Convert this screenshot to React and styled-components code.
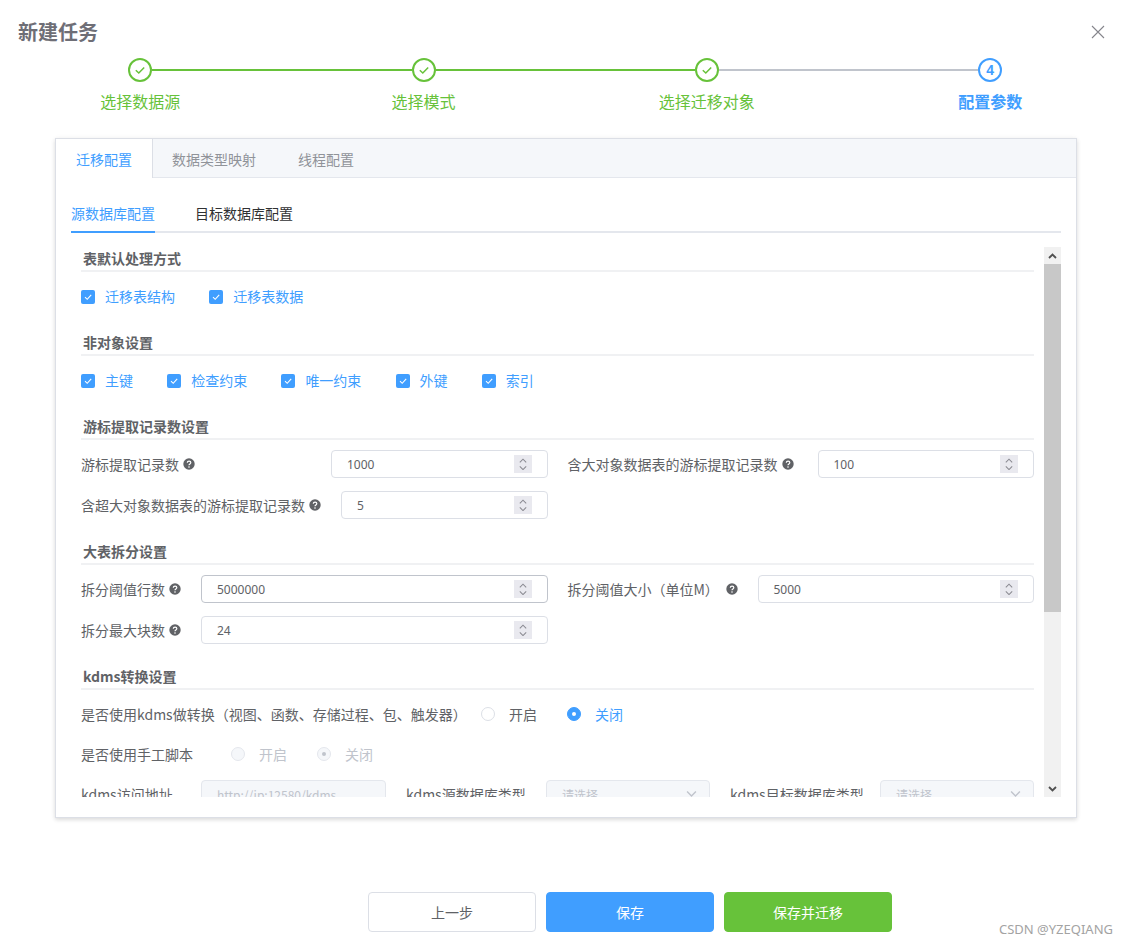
import React from "react"
import styled, { createGlobalStyle } from "styled-components"

const GlobalStyle = createGlobalStyle`
html, body {
  margin: 0;
  padding: 0;
  background: #fff;
  font-family: "Noto Sans CJK SC", "Noto Sans", sans-serif;
}
* { box-sizing: border-box; }
`

const Page = styled.div`
position: relative;
width: 1128px;
height: 946px;
overflow: hidden;
background: #fff;
`

const Header = styled.div`
display: flex;
justify-content: space-between;
align-items: center;
height: 58px;
padding: 6px 23px 0 18px;
`

const Title = styled.h1`
margin: 0;
font-size: 20px;
font-weight: 700;
line-height: 28px;
color: #6e6e76;
`

const CloseBtn = styled.button`
display: flex;
padding: 0;
border: none;
background: none;
color: #85858c;
cursor: pointer;
`

const Steps = styled.div`
display: grid;
grid-template-columns: repeat(4, 283.33px);
width: 1134px;
margin-left: -1.5px;
height: 80px;
`

const Step = styled.div`
display: flex;
flex-direction: column;
align-items: stretch;
`

const StepHead = styled.div`
display: flex;
align-items: center;
height: 24px;
`

const Seg = styled.div`
flex: 1;
height: 2px;
background: ${props => props.$color};
`

const Circle = styled.div`
display: flex;
align-items: center;
justify-content: center;
width: 24px;
height: 24px;
border: 2px solid ${props => props.$color};
border-radius: 50%;
color: ${props => props.$color};
font-family: "Liberation Sans", sans-serif;
font-size: 14px;
font-weight: 700;
`

const StepLabel = styled.div`
margin-top: 7px;
text-align: center;
font-size: 16px;
line-height: 24px;
font-weight: ${props => props.$active ? 700 : 400};
color: ${props => props.$active ? "#409eff" : "#67c23a"};
`

const Card = styled.div`
width: 1022px;
height: 680px;
margin-left: 55px;
border: 1px solid #dcdfe6;
background: #fff;
box-shadow: 0 2px 4px rgba(0,0,0,0.12), 0 0 6px rgba(0,0,0,0.04);
`

const TabBar = styled.div`
display: flex;
height: 39px;
background: #f5f7fa;
border-bottom: 1px solid #e4e7ed;
`

const Tab = styled.div`
height: ${props => props.$active ? "39px" : "38px"};
padding: ${props => props.$active ? "0 20px" : "0 22px 0 20px"};
margin-right: ${props => props.$active ? "-1px" : "0"};
line-height: 41px;
font-size: 14px;
color: ${props => props.$active ? "#409eff" : "#909399"};
background: ${props => props.$active ? "#fff" : "transparent"};
border-right: ${props => props.$active ? "1px solid #dcdfe6" : "none"};
`

const CardBody = styled.div`
padding: 17px 15px 0;
`

const InnerTabs = styled.div`
display: flex;
gap: 40px;
height: 38px;
border-bottom: 2px solid #e4e7ed;
margin-bottom: 14px;
`

const InnerTab = styled.div`
height: 38px;
line-height: 36px;
font-size: 14px;
color: ${props => props.$active ? "#409eff" : "#303133"};
border-bottom: ${props => props.$active ? "2px solid #409eff" : "none"};
`

const ScrollArea = styled.div`
display: flex;
height: 550px;
`

const ScrollContent = styled.div`
flex: 1;
overflow: hidden;
padding: 1px 10px 0;
`

const ScrollBar = styled.div`
display: flex;
flex-direction: column;
width: 17px;
background: #f1f1f1;
`

const ScrollArrow = styled.div`
display: flex;
align-items: center;
justify-content: center;
height: 17px;
color: #505050;
`

const ScrollThumb = styled.div`
height: 348px;
background: #c8c8c8;
`

const ScrollFill = styled.div`
flex: 1;
`

const Section = styled.section`
padding-bottom: 22px;
`

const SectionTitle = styled.div`
height: 24px;
padding-left: 2px;
margin-bottom: 10px;
border-bottom: 2px solid #f0f1f3;
font-size: 14px;
font-weight: 700;
line-height: 21px;
color: #606266;
`

const CheckRow = styled.div`
display: flex;
align-items: center;
height: 28px;
`

const Check = styled.label`
display: flex;
align-items: center;
margin-right: 34.2px;
font-size: 14px;
color: #409eff;
`

const CheckBox = styled.span`
display: flex;
align-items: center;
justify-content: center;
width: 14px;
height: 14px;
margin: 2px 10px 0 0;
border-radius: 2px;
background: #409eff;
color: #fff;
`

const FormRow = styled.div`
display: flex;
gap: 20px;
margin-bottom: ${props => props.$gap || 13}px;
&:last-child { margin-bottom: 0; }
`

const FormItem = styled.div`
display: flex;
align-items: center;
flex: ${props => props.$grow || 1} 1 0;
height: 28px;
min-width: 0;
`

const Label = styled.div`
display: flex;
align-items: center;
flex: none;
width: ${props => props.$w}px;
font-size: 14px;
color: #606266;
white-space: nowrap;
`

const HelpIcon = styled.svg`
width: 12px;
height: 12px;
margin-left: ${props => props.$ml || 4}px;
flex: none;
`

const NumInput = styled.div`
display: flex;
align-items: center;
justify-content: space-between;
flex: 1;
height: 28px;
padding: 0 15px 0 15px;
border: 1px solid ${props => props.$hover ? "#c0c4cc" : "#dcdfe6"};
border-radius: 4px;
font-family: "Noto Sans", sans-serif;
font-size: 12px;
color: #606266;
`

const Spinner = styled.div`
display: flex;
flex-direction: column;
align-items: center;
justify-content: center;
gap: 3px;
width: 18px;
height: 18px;
background: #e9e9ef;
color: #8b8b92;
`

const Choice = styled.label`
display: flex;
align-items: center;
margin-right: 30px;
font-size: 14px;
color: ${props => props.$disabled ? "#c0c4cc" : props.$checked ? "#409eff" : "#606266"};
`

const RadioDot = styled.span`
display: flex;
align-items: center;
justify-content: center;
width: 14px;
height: 14px;
margin-right: 14px;
border-radius: 50%;
border: 1px solid ${props => props.$disabled ? "#e4e7ed" : props.$checked ? "#409eff" : "#dcdfe6"};
background: ${props => props.$disabled ? "#f5f7fa" : props.$checked ? "#409eff" : "#fff"};
&::after {
  content: "";
  display: ${props => props.$checked ? "block" : "none"};
  width: 4px;
  height: 4px;
  border-radius: 50%;
  background: ${props => props.$disabled ? "#c0c4cc" : "#fff"};
}
`

const DisabledField = styled.div`
display: flex;
align-items: center;
justify-content: space-between;
flex: 1;
height: 28px;
padding: 0 12px 0 15px;
border: 1px solid #e4e7ed;
border-radius: 4px;
background: #f5f7fa;
font-size: 12px;
color: #c0c4cc;
`

const Footer = styled.div`
display: flex;
gap: 10px;
padding-left: 368px;
margin-top: 74px;
`

const Button = styled.button`
width: 168px;
height: 40px;
padding: 0;
border: 1px solid ${props => props.$bg || "#dcdfe6"};
border-radius: 4px;
background: ${props => props.$bg || "#fff"};
color: ${props => props.$bg ? "#fff" : "#606266"};
font-family: inherit;
font-size: 14px;
cursor: pointer;
`

const Watermark = styled.div`
position: absolute;
right: 15px;
bottom: 8px;
font-family: "Noto Sans", sans-serif;
font-size: 13px;
color: #a3a3a3;
`

const steps = [
  { name: "选择数据源", done: true },
  { name: "选择模式", done: true },
  { name: "选择迁移对象", done: true },
  { name: "配置参数", done: false },
]

const Help = ({ ml }) => (
  <HelpIcon $ml={ml} viewBox="0 0 12 12">
    <circle cx="6" cy="6" r="5.7" fill="#606266" />
    <path d="M4.3 4.7c0-1 .8-1.6 1.8-1.6s1.7.6 1.7 1.5c0 1.3-1.8 1.3-1.8 2.6" fill="none" stroke="#fff" strokeWidth="1.2" />
    <circle cx="6" cy="9" r=".8" fill="#fff" />
  </HelpIcon>
)

const Chevron = ({ up, size = 8 }) => (
  <svg width={size} height={size * 0.6} viewBox="0 0 10 6" fill="none" stroke="currentColor" strokeWidth="1.3">
    <path d={up ? "M1 5.5 5 1.5l4 4" : "M1 .5l4 4 4-4"} />
  </svg>
)

const Number = ({ value, hover }) => (
  <NumInput $hover={hover}>
    {value}
    <Spinner>
      <Chevron up />
      <Chevron />
    </Spinner>
  </NumInput>
)

const TinyCheck = () => (
  <svg width="10" height="10" viewBox="0 0 10 10" fill="none" stroke="currentColor" strokeWidth="1.1">
    <path d="M2 5.2 4.2 7.3 8.2 2.8" />
  </svg>
)

const CheckItem = ({ children }) => (
  <Check>
    <CheckBox><TinyCheck /></CheckBox>
    {children}
  </Check>
)

const Radio = ({ children, checked, disabled }) => (
  <Choice $checked={checked} $disabled={disabled}>
    <RadioDot $checked={checked} $disabled={disabled} />
    {children}
  </Choice>
)

function StepItem({ step, index }) {
  const color = step.done ? "#67c23a" : "#409eff"
  const leftColor = index === 0 ? "transparent" : step.done ? "#67c23a" : "#c0c4cc"
  const rightColor = index === steps.length - 1 ? "transparent" : steps[index + 1].done ? "#67c23a" : "#c0c4cc"
  return (
    <Step>
      <StepHead>
        <Seg $color={leftColor} />
        <Circle $color={color}>
          {step.done ? (
            <svg width="14" height="14" viewBox="0 0 14 14" fill="none" stroke="currentColor" strokeWidth="1.5">
              <path d="M2.8 7.2 5.8 10l5.4-5.6" />
            </svg>
          ) : index + 1}
        </Circle>
        <Seg $color={rightColor} />
      </StepHead>
      <StepLabel $active={!step.done}>{step.name}</StepLabel>
    </Step>
  )
}

export default function App() {
  return (
    <Page>
      <GlobalStyle />
      <Header>
        <Title>新建任务</Title>
        <CloseBtn>
          <svg width="14" height="14" viewBox="0 0 14 14" stroke="currentColor" strokeWidth="1.1">
            <path d="M1 1l12 12M13 1 1 13" />
          </svg>
        </CloseBtn>
      </Header>
      <Steps>
        {steps.map((s, i) => <StepItem key={s.name} step={s} index={i} />)}
      </Steps>
      <Card>
        <TabBar>
          <Tab $active>迁移配置</Tab>
          <Tab>数据类型映射</Tab>
          <Tab>线程配置</Tab>
        </TabBar>
        <CardBody>
          <InnerTabs>
            <InnerTab $active>源数据库配置</InnerTab>
            <InnerTab>目标数据库配置</InnerTab>
          </InnerTabs>
          <ScrollArea>
            <ScrollContent>
              <Section>
                <SectionTitle>表默认处理方式</SectionTitle>
                <CheckRow>
                  <CheckItem>迁移表结构</CheckItem>
                  <CheckItem>迁移表数据</CheckItem>
                </CheckRow>
              </Section>
              <Section>
                <SectionTitle>非对象设置</SectionTitle>
                <CheckRow>
                  <CheckItem>主键</CheckItem>
                  <CheckItem>检查约束</CheckItem>
                  <CheckItem>唯一约束</CheckItem>
                  <CheckItem>外键</CheckItem>
                  <CheckItem>索引</CheckItem>
                </CheckRow>
              </Section>
              <Section>
                <SectionTitle>游标提取记录数设置</SectionTitle>
                <FormRow>
                  <FormItem>
                    <Label $w={250}>游标提取记录数<Help /></Label>
                    <Number value="1000" />
                  </FormItem>
                  <FormItem>
                    <Label $w={250}>含大对象数据表的游标提取记录数<Help /></Label>
                    <Number value="100" />
                  </FormItem>
                </FormRow>
                <FormRow>
                  <FormItem>
                    <Label $w={260}>含超大对象数据表的游标提取记录数<Help /></Label>
                    <Number value="5" />
                  </FormItem>
                  <FormItem />
                </FormRow>
              </Section>
              <Section>
                <SectionTitle>大表拆分设置</SectionTitle>
                <FormRow>
                  <FormItem>
                    <Label $w={120}>拆分阈值行数<Help /></Label>
                    <Number value="5000000" hover />
                  </FormItem>
                  <FormItem>
                    <Label $w={190}>拆分阈值大小（单位M）<Help ml={7} /></Label>
                    <Number value="5000" />
                  </FormItem>
                </FormRow>
                <FormRow>
                  <FormItem>
                    <Label $w={120}>拆分最大块数<Help /></Label>
                    <Number value="24" />
                  </FormItem>
                  <FormItem />
                </FormRow>
              </Section>
              <Section>
                <SectionTitle>kdms转换设置</SectionTitle>
                <FormRow $gap={12}>
                  <FormItem>
                    <Label $w={400}>是否使用kdms做转换（视图、函数、存储过程、包、触发器）</Label>
                    <Radio>开启</Radio>
                    <Radio checked>关闭</Radio>
                  </FormItem>
                </FormRow>
                <FormRow $gap={12}>
                  <FormItem>
                    <Label $w={150}>是否使用手工脚本</Label>
                    <Radio disabled>开启</Radio>
                    <Radio disabled checked>关闭</Radio>
                  </FormItem>
                </FormRow>
                <FormRow>
                  <FormItem $grow={305}>
                    <Label $w={120}>kdms访问地址</Label>
                    <DisabledField>http://ip:12580/kdms</DisabledField>
                  </FormItem>
                  <FormItem $grow={304}>
                    <Label $w={140}>kdms源数据库类型</Label>
                    <DisabledField>请选择<Chevron size={11} /></DisabledField>
                  </FormItem>
                  <FormItem $grow={304}>
                    <Label $w={150}>kdms目标数据库类型</Label>
                    <DisabledField>请选择<Chevron size={11} /></DisabledField>
                  </FormItem>
                </FormRow>
              </Section>
            </ScrollContent>
            <ScrollBar>
              <ScrollArrow>
                <svg width="9" height="6" viewBox="0 0 9 6" fill="none" stroke="currentColor" strokeWidth="1.8"><path d="M1 5l3.5-3.5L8 5" /></svg>
              </ScrollArrow>
              <ScrollThumb />
              <ScrollFill />
              <ScrollArrow>
                <svg width="9" height="6" viewBox="0 0 9 6" fill="none" stroke="currentColor" strokeWidth="1.8"><path d="M1 1l3.5 3.5L8 1" /></svg>
              </ScrollArrow>
            </ScrollBar>
          </ScrollArea>
        </CardBody>
      </Card>
      <Footer>
        <Button>上一步</Button>
        <Button $bg="#409eff">保存</Button>
        <Button $bg="#67c23a">保存并迁移</Button>
      </Footer>
      <Watermark>CSDN @YZEQIANG</Watermark>
    </Page>
  )
}
